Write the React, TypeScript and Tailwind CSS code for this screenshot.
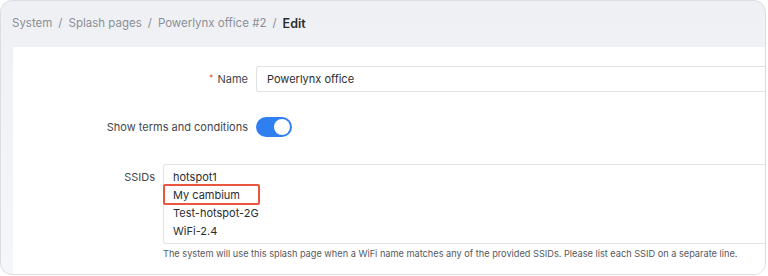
const ssids = ["hotspot1", "My cambium", "Test-hotspot-2G", "WiFi-2.4"];

export default function App() {
  return (
    <div className="w-[768px] h-[276px] bg-white" style={{ fontFamily: "Inter, 'Noto Sans', sans-serif" }}>
      <div className="w-[766px] h-[275px] rounded-[12px] border border-[#dcdde3] overflow-hidden flex flex-col bg-gradient-to-b from-[#eff0f4] to-[#f5f6fa]">
        {/* Breadcrumb */}
        <div className="shrink-0 h-[46px] flex items-center pl-[11px] text-[11.5px] text-[#8b8f97]">
          <span>System</span>
          <span className="mx-[6px]">/</span>
          <span>Splash pages</span>
          <span className="mx-[6px]">/</span>
          <span>Powerlynx office #2</span>
          <span className="mx-[6px]">/</span>
          <span className="font-semibold text-[#2b2d31] text-[12.5px]">Edit</span>
        </div>

        {/* Form panel */}
        <div className="flex-1 ml-[12px] bg-white text-[11px] text-[#44474d]">
          <div className="flex items-center pt-[19px]">
            <div className="w-[235px] text-right">
              <span className="text-[#f0554a] mr-[4px] text-[9px] align-top">*</span>
              Name
            </div>
            <div className="ml-[8px] flex-1 h-[26px] border border-r-0 border-[#e1e2e6] rounded-l-[3px] flex items-center pl-[10px] text-[#2b2d31]">
              Powerlynx office
            </div>
          </div>

          <div className="flex items-center mt-[25px]">
            <div className="w-[235px] text-right">Show terms and conditions</div>
            <div className="ml-[8px] w-[36px] h-[20px] rounded-full bg-[#2f7ff0] flex items-center justify-end pr-[2px]">
              <div className="w-[16px] h-[16px] rounded-full bg-white" />
            </div>
          </div>

          <div className="flex items-start mt-[27px]">
            <div className="w-[142px] text-right pt-[4px] leading-[18px]">SSIDs</div>
            <div className="ml-[8px] flex-1 flex flex-col">
              <div className="relative h-[80px] border border-r-0 border-[#e1e2e6] rounded-l-[3px] pl-[9px] pt-[3px] text-[#2b2d31] leading-[18px]">
                {ssids.map((s) => (
                  <div key={s}>{s}</div>
                ))}
                <div className="absolute left-[-1px] top-[19px] w-[97px] h-[21px] border-2 border-[#e9553f] rounded-[2px]" />
              </div>
              <div className="mt-[4px] text-[9.2px] leading-[12px] text-[#55585e] whitespace-nowrap">
                The system will use this splash page when a WiFi name matches any of the provided SSIDs. Please list each SSID on a separate line.
              </div>
            </div>
          </div>
        </div>
      </div>
    </div>
  );
}
